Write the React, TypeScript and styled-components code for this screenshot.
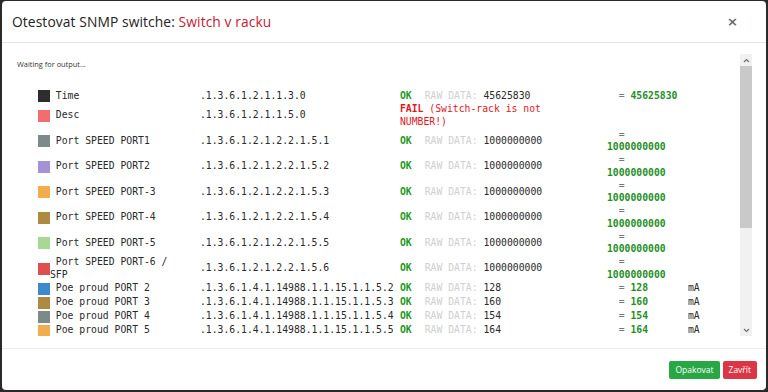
import React from "react";
import styled, { createGlobalStyle } from "styled-components";

type Row = {
  color: string;
  name: string;
  oid: string;
  raw?: string;
  value?: string;
  unit?: string;
  fail?: string;
};

const rows: Row[] = [
  { color: "#2d2d2d", name: "Time", oid: ".1.3.6.1.2.1.1.3.0", raw: "45625830", value: "45625830" },
  { color: "#f26d6d", name: "Desc", oid: ".1.3.6.1.2.1.1.5.0", fail: "(Switch-rack is not NUMBER!)" },
  { color: "#7d8a8a", name: "Port SPEED PORT1", oid: ".1.3.6.1.2.1.2.2.1.5.1", raw: "1000000000", value: "1000000000" },
  { color: "#a393d6", name: "Port SPEED PORT2", oid: ".1.3.6.1.2.1.2.2.1.5.2", raw: "1000000000", value: "1000000000" },
  { color: "#f2ad4e", name: "Port SPEED PORT-3", oid: ".1.3.6.1.2.1.2.2.1.5.3", raw: "1000000000", value: "1000000000" },
  { color: "#ad8a40", name: "Port SPEED PORT-4", oid: ".1.3.6.1.2.1.2.2.1.5.4", raw: "1000000000", value: "1000000000" },
  { color: "#a5d995", name: "Port SPEED PORT-5", oid: ".1.3.6.1.2.1.2.2.1.5.5", raw: "1000000000", value: "1000000000" },
  { color: "#de4f4f", name: "Port SPEED PORT-6 / SFP", oid: ".1.3.6.1.2.1.2.2.1.5.6", raw: "1000000000", value: "1000000000" },
  { color: "#3e89cc", name: "Poe proud PORT 2", oid: ".1.3.6.1.4.1.14988.1.1.15.1.1.5.2", raw: "128", value: "128", unit: "mA" },
  { color: "#ad8a40", name: "Poe proud PORT 3", oid: ".1.3.6.1.4.1.14988.1.1.15.1.1.5.3", raw: "160", value: "160", unit: "mA" },
  { color: "#7d8a8a", name: "Poe proud PORT 4", oid: ".1.3.6.1.4.1.14988.1.1.15.1.1.5.4", raw: "154", value: "154", unit: "mA" },
  { color: "#f2ad4e", name: "Poe proud PORT 5", oid: ".1.3.6.1.4.1.14988.1.1.15.1.1.5.5", raw: "164", value: "164", unit: "mA" },
];

const GlobalStyle = createGlobalStyle`
  html, body {
    margin: 0;
    padding: 0;
    background: #2a2828;
  }
  body {
    font-family: "Open Sans", "Liberation Sans", sans-serif;
  }
`;

const Page = styled.div`
  height: 392px;
  box-sizing: border-box;
  padding: 1px 2px 2px 2px;
  display: flex;
`;

const Modal = styled.div`
  flex: 1;
  display: flex;
  flex-direction: column;
  background: #fff;
  border-radius: 4px;
  overflow: hidden;
`;

const Header = styled.div`
  height: 41px;
  flex: 0 0 auto;
  display: flex;
  align-items: center;
  justify-content: space-between;
  padding: 0 28px 0 10px;
  border-bottom: 1px solid #e6e6e6;
`;

const Title = styled.h5`
  margin: 0;
  font-size: 13.8px;
  font-weight: 500;
  color: #222;
  letter-spacing: 0.1px;
`;

const Accent = styled.span`
  color: #c41a32;
`;

const Close = styled.span`
  font-family: "DejaVu Sans", sans-serif;
  font-size: 13px;
  font-weight: bold;
  color: #666;
  line-height: 1;
`;

const Body = styled.div`
  flex: 1;
  min-height: 0;
  padding: 11px 14px 12px 12px;
  border-bottom: 1px solid #ececec;
  display: flex;
`;

const Output = styled.div`
  flex: 1;
  display: flex;
  min-width: 0;
`;

const Content = styled.div`
  flex: 1;
  overflow: hidden;
  padding: 4px 0 0 3px;
`;

const ScrollBar = styled.div`
  flex: 0 0 12px;
  display: flex;
  flex-direction: column;
  background: #f1f1f1;
`;

const ScrollArrow = styled.div`
  height: 12px;
  display: flex;
  align-items: center;
  justify-content: center;
`;

const ScrollTrack = styled.div`
  flex: 1;
`;

const ScrollThumb = styled.div`
  height: 162px;
  background: #c9c9c9;
`;

const Waiting = styled.div`
  font-size: 7.4px;
  line-height: 12px;
  color: #333;
  margin-bottom: 19px;
`;

const Table = styled.div`
  margin-left: 21px;
  font-family: "DejaVu Sans Mono", "Liberation Mono", monospace;
  font-size: 9.75px;
  line-height: 12.75px;
  color: #2a2a2a;
`;

const Line = styled.div`
  display: grid;
  grid-template-columns: 12px 150px 200px 207px 81px auto;
  align-items: center;
  min-height: 14px;
`;

const Swatch = styled.span<{ color: string }>`
  display: block;
  width: 12px;
  height: 12px;
  background: ${({ color }) => color};
`;

const Name = styled.span`
  padding-right: 12px;
`;

const Status = styled.span`
  padding-right: 40px;
`;

const Ok = styled.b`
  color: #1f9a1f;
`;

const Fail = styled.span`
  color: #e0191e;
`;

const RawLabel = styled.span`
  color: #cfcfcf;
  margin-left: 13px;
`;

const Value = styled.span`
  padding-right: 5px;
  color: #777;
  b {
    color: #1f8f1f;
  }
`;

const Footer = styled.div`
  height: 41px;
  flex: 0 0 auto;
  display: flex;
  align-items: center;
  justify-content: flex-end;
  gap: 3px;
  padding: 0 9px;
`;

const Button = styled.button<{ tone: string }>`
  font-family: "Open Sans", "Liberation Sans", sans-serif;
  font-size: 8.5px;
  height: 18px;
  padding: 0 6px;
  border: none;
  border-radius: 2px;
  color: #fff;
  background: ${({ tone }) => tone};
`;

const Chevron = ({ up }: { up?: boolean }) => (
  <svg width="7" height="5" viewBox="0 0 7 5">
    <path
      d={up ? "M1 4 L3.5 1.5 L6 4" : "M1 1 L3.5 3.5 L6 1"}
      fill="none"
      stroke="#707070"
      strokeWidth="1.2"
    />
  </svg>
);

const App = () => {
  return (
    <>
      <GlobalStyle />
      <Page>
        <Modal>
          <Header>
            <Title>
              Otestovat SNMP switche: <Accent>Switch v racku</Accent>
            </Title>
            <Close>×</Close>
          </Header>
          <Body>
            <Output>
              <Content>
                <Waiting>Waiting for output...</Waiting>
                <Table>
                  {rows.map((r, i) => (
                    <Line key={i}>
                      <Swatch color={r.color} />
                      <Name>{"\u00a0" + r.name}</Name>
                      <span>{r.oid}</span>
                      {r.fail ? (
                        <Status>
                          <Fail>
                            <b>FAIL</b> {r.fail}
                          </Fail>
                        </Status>
                      ) : (
                        <Status>
                          <Ok>OK</Ok>
                          <RawLabel>RAW DATA:</RawLabel> {r.raw}
                        </Status>
                      )}
                      <Value>
                        {r.value && (
                          <>
                            {"\u00a0\u00a0= "}
                            <b>{r.value}</b>
                          </>
                        )}
                      </Value>
                      <span>{r.unit}</span>
                    </Line>
                  ))}
                </Table>
              </Content>
              <ScrollBar>
                <ScrollArrow>
                  <Chevron up />
                </ScrollArrow>
                <ScrollTrack>
                  <ScrollThumb />
                </ScrollTrack>
                <ScrollArrow>
                  <Chevron />
                </ScrollArrow>
              </ScrollBar>
            </Output>
          </Body>
          <Footer>
            <Button tone="#28a745">Opakovat</Button>
            <Button tone="#dc3545">Zavřít</Button>
          </Footer>
        </Modal>
      </Page>
    </>
  );
};

export default App;
